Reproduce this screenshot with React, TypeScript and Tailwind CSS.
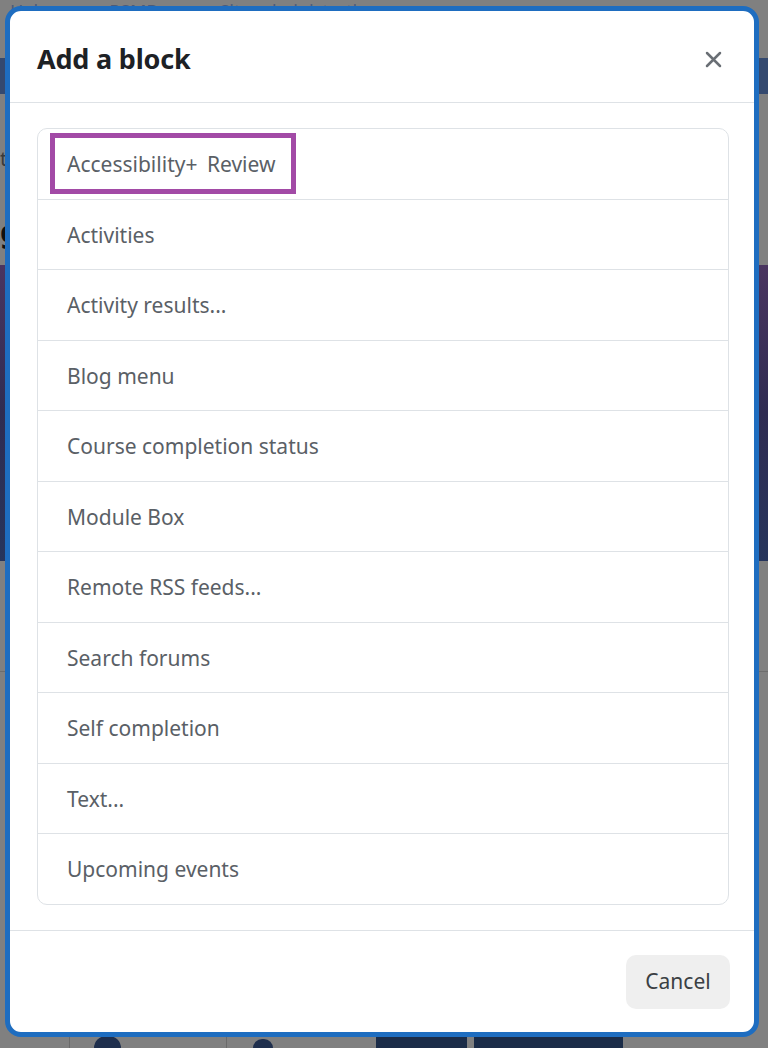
import React from 'react';

const BLOCKS = [
  'Activities',
  'Activity results...',
  'Blog menu',
  'Course completion status',
  'Module Box',
  'Remote RSS feeds...',
  'Search forums',
  'Self completion',
  'Text...',
  'Upcoming events',
];

const font = { fontFamily: '"Noto Sans", "Open Sans", Arial, sans-serif' };

const CloseIcon = () => (
  <svg width="17" height="17" viewBox="0 0 17 17" fill="none">
    <path d="M2 2 L15 15 M15 2 L2 15" stroke="#6a6f75" strokeWidth="2.5" strokeLinecap="round" />
  </svg>
);

export default function App() {
  return (
    <div className="relative w-[768px] h-[1048px] overflow-hidden bg-[#808080]" style={font}>
      {/* dimmed page behind the dialog */}
      <div className="flex flex-col w-full h-full">
        <div className="h-[22px] flex items-center gap-[60px] pl-[10px] text-[18px] text-[#4b5b7a]">
          <span>Help</span>
          <span>PSMD</span>
          <span>Site administration</span>
        </div>
        <div className="h-[36px]" />
        <div className="h-[36px] bg-[#34496f]" />
        <div className="h-[50px]" />
        <div className="h-[30px] text-[20px] text-[#3a3a3a] leading-[30px]">ta</div>
        <div className="h-[40px]" />
        <div className="h-[34px] text-[28px] font-bold text-[#111] leading-[34px]">g</div>
        <div className="h-[17px]" />
        <div className="h-[296px] bg-gradient-to-b from-[#4a3560] via-[#2f2c52] to-[#26355c]" />
        <div className="flex-1 border-t border-[#6d6d6d] mt-[110px]" />
        <div className="h-[16px] flex items-end">
          <div className="ml-[69px] w-px h-[16px] bg-[#6a6a6a]" />
          <div className="ml-[24px] w-[27px] h-[12px] rounded-t-full bg-[#1f2f4d]" />
          <div className="ml-[105px] w-px h-[16px] bg-[#6a6a6a]" />
          <div className="ml-[26px] w-[20px] h-[9px] rounded-t-full bg-[#1f2f4d]" />
          <div className="ml-[103px] w-[91px] h-[16px] bg-[#1b2c48]" />
          <div className="ml-[7px] w-[149px] h-[16px] bg-[#1b2c48]" />
        </div>
      </div>

      {/* dialog */}
      <div className="absolute left-[5px] top-[6px] w-[754px] h-[1031px] rounded-[16px] border-[5px] border-[#1e6dc0] bg-white flex flex-col overflow-hidden">
        <div className="h-[92px] shrink-0 flex items-center justify-between pt-[5px] pl-[27px] pr-[32px] border-b border-[#dee2e6]">
          <h2 className="text-[27px] font-bold text-[#1d2125] tracking-[-0.2px]">Add a block</h2>
          <CloseIcon />
        </div>

        <div className="flex-1 pt-[25px] pl-[27px] pr-[25px] pb-[24px]">
          <div className="border border-[#dee2e6] rounded-[10px] flex flex-col text-[21px] text-[#5a6066]">
            <div className="h-[69.5px] flex items-center">
              <div className="ml-[12px] h-[61px] flex items-center border-[5px] border-[#a24aa6] pl-[12px] pr-[16px] pt-[2px] [word-spacing:4px]">
                Accessibility+ Review
              </div>
            </div>
            {BLOCKS.map((b) => (
              <div key={b} className="h-[70.5px] flex items-center pl-[29px] pt-[2px] border-t border-[#dee2e6]">
                {b}
              </div>
            ))}
          </div>
        </div>

        <div className="h-[102px] shrink-0 flex items-center justify-end pr-[24px] border-t border-[#dee2e6]">
          <button className="w-[104px] h-[54px] rounded-[10px] bg-[#efefef] text-[21px] text-[#3b3f44]">Cancel</button>
        </div>
      </div>
    </div>
  );
}
